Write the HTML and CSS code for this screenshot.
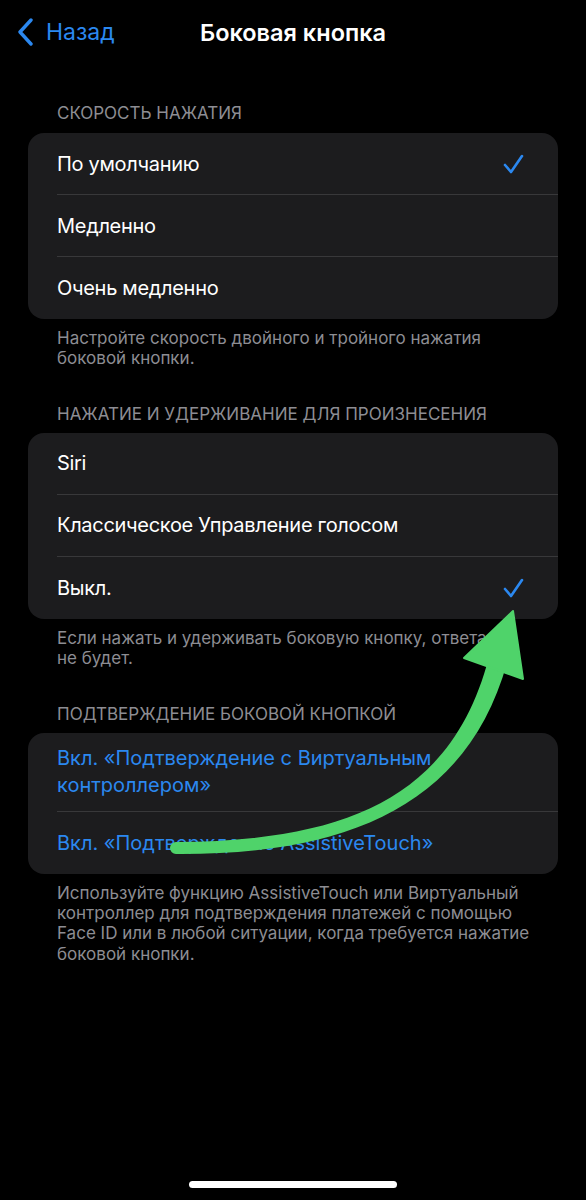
FILE: index.html
```html
<!DOCTYPE html>
<html lang="ru">
<head>
  <meta charset="UTF-8">
  <title>Боковая кнопка</title>
  <link rel="stylesheet" href="styles.css">
</head>
<body>
  <div class="screen">
    <header class="nav">
      <a class="back" href="#">
        <svg class="chevron" width="18" height="28" viewBox="0 0 18 28">
          <polyline points="14,2 3,14 14,26" />
        </svg>
        Назад
      </a>
      <h1 class="title">Боковая кнопка</h1>
    </header>

    <section class="group">
      <h2 class="group-header">СКОРОСТЬ НАЖАТИЯ</h2>
      <ul class="card">
        <li class="row"><div class="row-inner">По умолчанию
          <svg class="check" width="21" height="20" viewBox="0 0 21 20"><polyline points="2,11 8,18 19,2" /></svg>
        </div></li>
        <li class="row"><div class="row-inner">Медленно</div></li>
        <li class="row"><div class="row-inner">Очень медленно</div></li>
      </ul>
      <p class="group-footer">Настройте скорость двойного и тройного нажатия<br>боковой кнопки.</p>
    </section>

    <section class="group">
      <h2 class="group-header">НАЖАТИЕ И УДЕРЖИВАНИЕ ДЛЯ ПРОИЗНЕСЕНИЯ</h2>
      <ul class="card">
        <li class="row"><div class="row-inner">Siri</div></li>
        <li class="row"><div class="row-inner">Классическое Управление голосом</div></li>
        <li class="row"><div class="row-inner">Выкл.
          <svg class="check" width="21" height="20" viewBox="0 0 21 20"><polyline points="2,11 8,18 19,2" /></svg>
        </div></li>
      </ul>
      <p class="group-footer">Если нажать и удерживать боковую кнопку, ответа<br>не будет.</p>
    </section>

    <section class="group">
      <h2 class="group-header">ПОДТВЕРЖДЕНИЕ БОКОВОЙ КНОПКОЙ</h2>
      <ul class="card">
        <li class="row row-tall"><div class="row-inner link">Вкл. «Подтверждение с Виртуальным<br>контроллером»</div></li>
        <li class="row"><div class="row-inner link">Вкл. «Подтверждение AssistiveTouch»</div></li>
      </ul>
      <p class="group-footer">Используйте функцию AssistiveTouch или Виртуальный<br>контроллер для подтверждения платежей с помощью<br>Face ID или в любой ситуации, когда требуется нажатие<br>боковой кнопки.</p>
    </section>

    <div class="home-indicator"></div>

    <!-- зелёная стрелка поверх списка: хвост тоньше, к наконечнику шире -->
    <svg class="arrow" width="586" height="1200" viewBox="0 0 586 1200">
      <path class="arrow-shaft" d="M176,842 C351,841 453,795 489,657 L507,663 C467,805 349,855 176,854 A6,6 0 0 1 176,842 Z" />
      <polygon class="arrow-head" points="464,658 513,611 523,679" />
    </svg>
  </div>
</body>
</html>
```

FILE: styles.css
```css
* { box-sizing: border-box; }
body { margin: 0; background: #000; color: #fff; font-family: Inter, "Noto Sans", sans-serif; }
.screen { position: relative; width: 586px; min-height: 1200px; display: flex; flex-direction: column; overflow: hidden; }

.nav { position: relative; height: 64px; display: flex; align-items: center; justify-content: center; }
.back { position: absolute; left: 17px; top: 0; height: 64px; display: flex; align-items: center; gap: 11px; color: #2b88f0; text-decoration: none; font-size: 23px; }
.chevron polyline { fill: none; stroke: #2b88f0; stroke-width: 3.4; stroke-linecap: round; stroke-linejoin: round; }
.title { margin: 0; font-size: 23.5px; font-weight: 600; }

.group { padding: 0 28px; }
.group-header { margin: 35px 0 9px; padding-left: 29px; font-size: 17px; font-weight: 400; line-height: 20px; color: #8d8d93; }
.group:first-of-type .group-header { margin: 39px 0 10px; }
.card { list-style: none; margin: 0; padding: 0; background: #1c1c1e; border-radius: 16px; overflow: hidden; }
.row { padding-left: 29px; font-size: 20px; letter-spacing: -0.3px; }
.row-inner { height: 62px; display: flex; align-items: center; justify-content: space-between; padding-right: 34px; border-bottom: 1px solid #38383a; }
.row:last-child .row-inner { border-bottom: none; }
.row-tall .row-inner { height: 79px; line-height: 27px; }
.link { color: #2b88f0; letter-spacing: 0; }
.check polyline { fill: none; stroke: #2b88f0; stroke-width: 2.6; stroke-linecap: round; stroke-linejoin: round; }

.group-footer { margin: 9px 0 0; padding-left: 29px; font-size: 17px; line-height: 20.4px; color: #8d8d93; }

.home-indicator { margin: auto auto 12px; width: 208px; height: 7px; border-radius: 4px; background: #fff; }

.arrow { position: absolute; left: 0; top: 0; pointer-events: none; }
.arrow-shaft { fill: #4fd36a; }
.arrow-head { fill: #4fd36a; stroke: #4fd36a; stroke-width: 2; stroke-linejoin: round; }
```
